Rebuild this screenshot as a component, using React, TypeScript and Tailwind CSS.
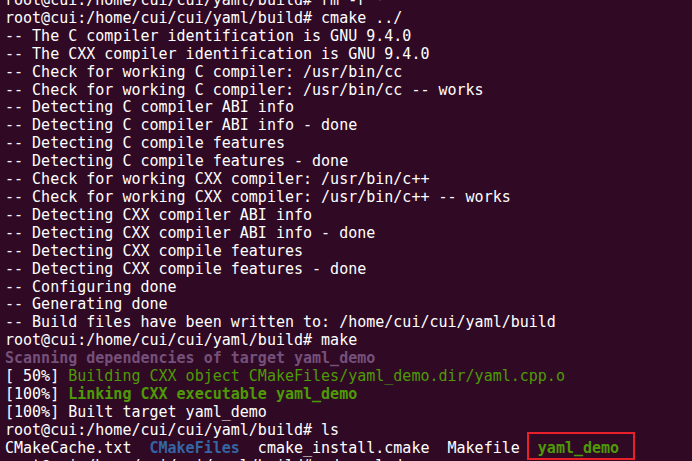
import { FC, ReactNode } from "react";

const prompt = "root@cui:/home/cui/cui/yaml/build#";

const Line: FC<{ children?: ReactNode }> = ({ children }) => (
  <div className="whitespace-pre h-[17.92px]">{children}</div>
);

const cmakeLines = [
  "-- The C compiler identification is GNU 9.4.0",
  "-- The CXX compiler identification is GNU 9.4.0",
  "-- Check for working C compiler: /usr/bin/cc",
  "-- Check for working C compiler: /usr/bin/cc -- works",
  "-- Detecting C compiler ABI info",
  "-- Detecting C compiler ABI info - done",
  "-- Detecting C compile features",
  "-- Detecting C compile features - done",
  "-- Check for working CXX compiler: /usr/bin/c++",
  "-- Check for working CXX compiler: /usr/bin/c++ -- works",
  "-- Detecting CXX compiler ABI info",
  "-- Detecting CXX compiler ABI info - done",
  "-- Detecting CXX compile features",
  "-- Detecting CXX compile features - done",
  "-- Configuring done",
  "-- Generating done",
  "-- Build files have been written to: /home/cui/cui/yaml/build",
];

const App: FC = () => (
  <div className="w-[692px] h-[461px] overflow-hidden bg-[#300a24] text-[#ffffff] font-['DejaVu_Sans_Mono',monospace] text-[15px] leading-[17.92px]">
    <div className="pl-[5px] -mt-[8px]">
      <Line>{prompt} rm -r *</Line>
      <Line>{prompt} cmake ../</Line>
      {cmakeLines.map((l) => (
        <Line key={l}>{l}</Line>
      ))}
      <Line>{prompt} make</Line>
      <Line>
        <span className="text-[#75507b] font-bold">Scanning dependencies of target yaml_demo</span>
      </Line>
      <Line>
        [ 50%] <span className="text-[#4e9a06]">Building CXX object CMakeFiles/yaml_demo.dir/yaml.cpp.o</span>
      </Line>
      <Line>
        [100%] <span className="text-[#4e9a06] font-bold">Linking CXX executable yaml_demo</span>
      </Line>
      <Line>[100%] Built target yaml_demo</Line>
      <Line>{prompt} ls</Line>
      <Line>
        {"CMakeCache.txt  "}
        <span className="text-[#3465a4] font-bold">CMakeFiles</span>
        {"  cmake_install.cmake  Makefile  "}
        <span className="relative text-[#4e9a06] font-bold">
          yaml_demo
          <span className="absolute -left-[11px] -right-[16px] -top-[7px] h-[28px] border-2 border-[#e8202a]" />
        </span>
      </Line>
      <Line>{prompt} cd yaml_demo</Line>
    </div>
  </div>
);

export default App;
